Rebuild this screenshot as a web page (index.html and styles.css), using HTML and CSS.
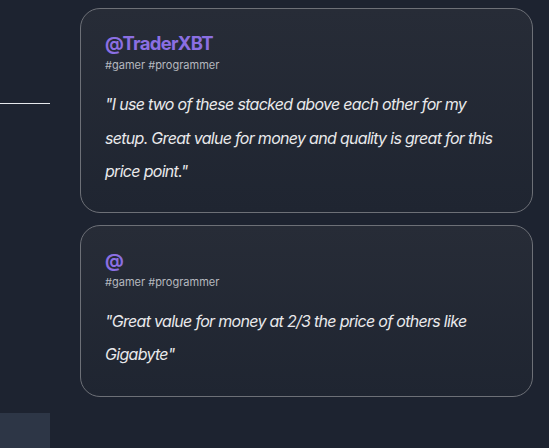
FILE: index.html
```html
<!DOCTYPE html>
<html lang="en">
<head>
<meta charset="utf-8">
<title>Testimonials</title>
<link rel="stylesheet" href="styles.css">
</head>
<body>
<div class="page">
  <aside class="side">
    <div class="side-line"></div>
    <div class="side-block"></div>
  </aside>
  <main class="reviews">
    <article class="card">
      <h3 class="handle">@TraderXBT</h3>
      <p class="tags">#gamer #programmer</p>
      <p class="quote">"I use two of these stacked above each other for my setup. Great value for money and quality is great for this price point."</p>
    </article>
    <article class="card">
      <h3 class="handle">@</h3>
      <p class="tags">#gamer #programmer</p>
      <p class="quote">"Great value for money at 2/3 the price of others like Gigabyte"</p>
    </article>
  </main>
</div>
</body>
</html>
```
FILE: styles.css
```css
* { box-sizing: border-box; }
html, body { margin: 0; padding: 0; }
body {
  background: #1d2330;
  font-family: "Inter", "Noto Sans", sans-serif;
  width: 549px;
  height: 448px;
  overflow: hidden;
}
.page {
  display: flex;
  height: 448px;
}
.side {
  width: 50px;
  flex: none;
  display: flex;
  flex-direction: column;
}
.side-line {
  margin-top: 103px;
  height: 1px;
  background: #e6e8ec;
}
.side-block {
  margin-top: auto;
  height: 35px;
  background: #2d3646;
}
.reviews {
  width: 453px;
  margin-left: 30px;
  padding-top: 8px;
  display: flex;
  flex-direction: column;
  gap: 12px;
}
.card {
  border: 1px solid #6d7077;
  border-radius: 20px;
  background: linear-gradient(180deg, #272c37 0%, #1f2531 100%);
  padding: 22px 25px 23px 24px;
}
.card + .card {
  padding-bottom: 24px;
}
.handle {
  margin: 0;
  font-size: 18.5px;
  line-height: 24px;
  font-weight: 700;
  color: #8b6fe2;
  letter-spacing: -0.7px;
}
.tags {
  margin: 2px 0 0;
  font-size: 11px;
  line-height: 16px;
  color: #b5b8bf;
  letter-spacing: 0;
}
.quote {
  margin: 15px 0 0;
  font-size: 16px;
  line-height: 33.5px;
  font-style: italic;
  color: #e9e9eb;
  letter-spacing: -0.7px;
}
```
